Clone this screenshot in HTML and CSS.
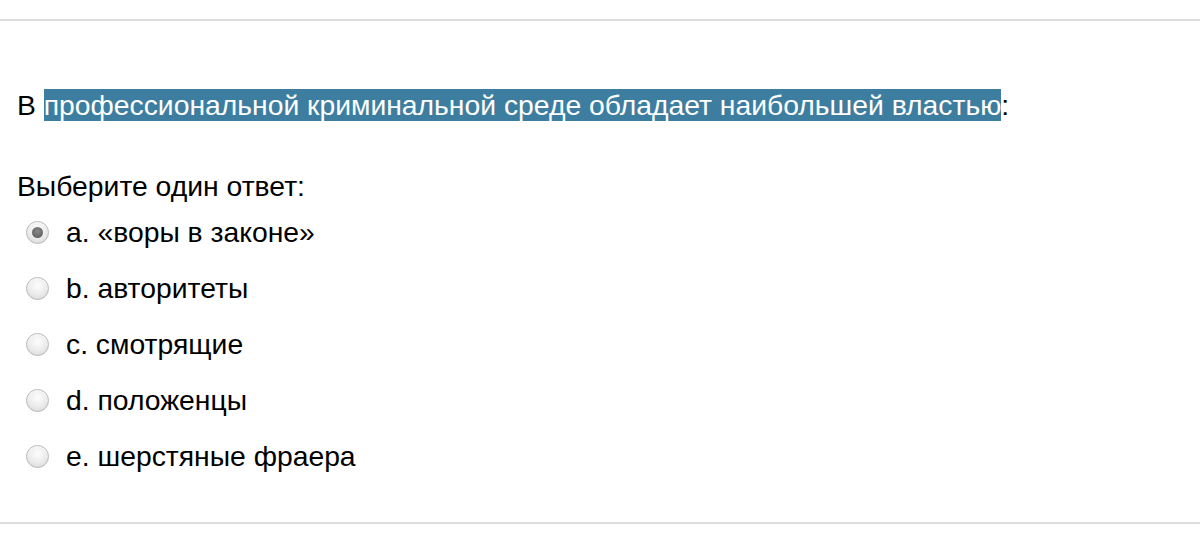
FILE: index.html
```html
<!DOCTYPE html>
<html lang="ru">
<head>
<meta charset="utf-8">
<link rel="stylesheet" href="styles.css">
</head>
<body>
<div class="page">
  <hr class="rule">
  <div class="question">
    <p class="qtext">В <span class="hl">профессиональной криминальной среде обладает наибольшей властью</span>:</p>
    <div class="prompt">Выберите один ответ:</div>
    <div class="answers">
      <label class="opt"><span class="radio checked"></span><span class="otext">a. «воры в законе»</span></label>
      <label class="opt"><span class="radio"></span><span class="otext">b. авторитеты</span></label>
      <label class="opt"><span class="radio"></span><span class="otext">c. смотрящие</span></label>
      <label class="opt"><span class="radio"></span><span class="otext">d. положенцы</span></label>
      <label class="opt"><span class="radio"></span><span class="otext">e. шерстяные фраера</span></label>
    </div>
  </div>
  <hr class="rule">
</div>
</body>
</html>
```
FILE: styles.css
```css
html, body {
  margin: 0;
  padding: 0;
  background: #fff;
}
.page {
  padding-top: 19px;
  font-family: "Liberation Sans", Arial, sans-serif;
  color: #000;
}
.rule {
  margin: 0;
  border: 0;
  height: 2px;
  background: #dcdcdc;
}
.question {
  padding: 0 17px;
  height: 501px;
  box-sizing: border-box;
  padding-top: 67px;
}
.qtext {
  margin: 0;
  font-size: 28.3px;
  line-height: 34px;
}
.hl {
  background: #3d7ea0;
  color: #fff;
}
.prompt {
  margin-top: 47px;
  font-size: 28.3px;
  line-height: 34px;
}
.answers {
  display: flex;
  flex-direction: column;
  margin-top: 1px;
}
.opt {
  display: flex;
  align-items: center;
  height: 56px;
  font-size: 28.3px;
}
.radio {
  width: 21px;
  height: 21px;
  margin-left: 9px;
  margin-right: 17px;
  border-radius: 50%;
  border: 1px solid #b8b8b8;
  background: radial-gradient(circle at 50% 35%, #fdfdfd 0%, #ebebeb 55%, #d2d2d2 100%);
  box-shadow: inset 0 1px 1px rgba(255,255,255,0.8);
  position: relative;
  flex: none;
}
.radio.checked::after {
  content: "";
  position: absolute;
  left: 5px;
  top: 5px;
  width: 11px;
  height: 11px;
  border-radius: 50%;
  background: radial-gradient(circle at 50% 40%, #8a8a8a, #555);
}
```
